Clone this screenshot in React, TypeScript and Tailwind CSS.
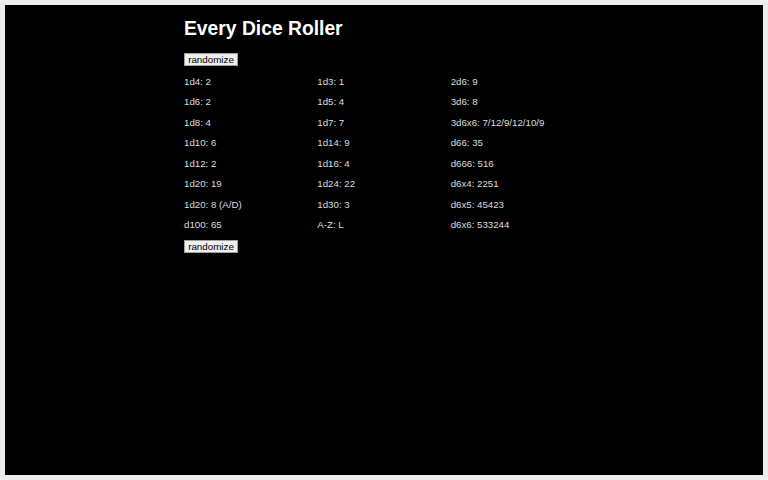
import React from "react";

const rows: [string, string, string][] = [
  ["1d4: 2", "1d3: 1", "2d6: 9"],
  ["1d6: 2", "1d5: 4", "3d6: 8"],
  ["1d8: 4", "1d7: 7", "3d6x6: 7/12/9/12/10/9"],
  ["1d10: 6", "1d14: 9", "d66: 35"],
  ["1d12: 2", "1d16: 4", "d666: 516"],
  ["1d20: 19", "1d24: 22", "d6x4: 2251"],
  ["1d20: 8 (A/D)", "1d30: 3", "d6x5: 45423"],
  ["d100: 65", "A-Z: L", "d6x6: 533244"],
];

function RandomizeButton({ className = "" }: { className?: string }) {
  return (
    <button
      type="button"
      className={`block w-[54px] h-[13px] bg-[#efefef] border border-[#a0a0a0] text-black text-[9.8px] leading-[11px] px-0 py-0 text-center ${className}`}
    >
      randomize
    </button>
  );
}

export default function App() {
  return (
    <div
      className="w-[768px] h-[480px] bg-[#eeeeee] p-[5px]"
      style={{ fontFamily: '"Liberation Sans", Arial, sans-serif' }}
    >
      <div className="h-[470px] bg-black pt-[12px]">
        <div className="w-[400px] mx-auto">
          <h1 className="text-white font-bold text-[19.3px] leading-[23px]">Every Dice Roller</h1>
          <RandomizeButton className="mt-[13px]" />
          <div className="grid grid-cols-3 mt-[6px] text-[#dddddd] text-[9.7px]">
            {rows.map((r, i) =>
              r.map((cell, j) => (
                <div key={`${i}-${j}`} className="h-[20.43px] leading-[20.43px] whitespace-nowrap">
                  {cell}
                </div>
              ))
            )}
          </div>
          <RandomizeButton className="mt-[5px]" />
        </div>
      </div>
    </div>
  );
}
